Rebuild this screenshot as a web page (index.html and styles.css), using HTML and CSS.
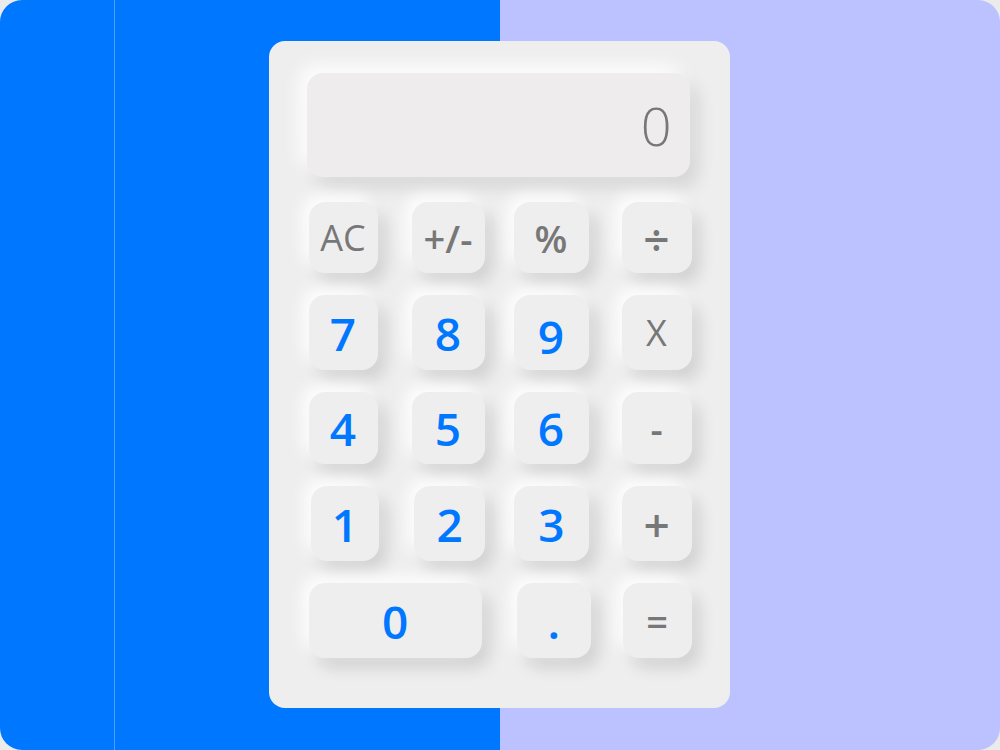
FILE: index.html
```html
<!DOCTYPE html>
<html lang="en">
<head>
    <meta charset="UTF-8">
    <meta name="viewport" content="width=device-width, initial-scale=1.0">
    <title>Calculator</title>
    <link rel="stylesheet" href="styles.css">
</head>
<body>
    <div class="stage">
        <div class="calculator">
            <div class="display" id="display">0</div>

            <div class="keys">
                <div class="row short">
                    <button class="key op c1">AC</button>
                    <button class="key op semi c2">+/-</button>
                    <button class="key op semi c3">%</button>
                    <button class="key op semi big c4">&divide;</button>
                </div>
                <div class="row tall">
                    <button class="key num c1">7</button>
                    <button class="key num c2">8</button>
                    <button class="key num c3 low">9</button>
                    <button class="key op c4">X</button>
                </div>
                <div class="row">
                    <button class="key num c1">4</button>
                    <button class="key num c2">5</button>
                    <button class="key num c3">6</button>
                    <button class="key op semi c4">-</button>
                </div>
                <div class="row shifted tall">
                    <button class="key num c1">1</button>
                    <button class="key num c2 tight">2</button>
                    <button class="key num c3">3</button>
                    <button class="key op semi big c4">+</button>
                </div>
                <div class="row tall">
                    <button class="key num zero">0</button>
                    <button class="key num dot">.</button>
                    <button class="key op semi eq">=</button>
                </div>
            </div>
        </div>
    </div>
</body>
</html>
```

FILE: styles.css
```css
* {
    box-sizing: border-box;
}
body {
    margin: 0;
    background-color: #ecebeb;
    font-family: "Open Sans", "Noto Sans", sans-serif;
}
.stage {
    position: relative;
    width: 1000px;
    height: 750px;
    border-radius: 22px;
    overflow: hidden;
    background: linear-gradient(90deg, #0077ff 0%, #0077ff 50%, #bbc2ff 50%, #bbc2ff 100%);
    display: flex;
    justify-content: center;
    padding-top: 41px;
}
/* thin guide line on the blue side */
.stage::before {
    content: "";
    position: absolute;
    top: 0;
    bottom: 0;
    left: 114px;
    width: 1px;
    background: rgba(255, 255, 255, 0.3);
}
.calculator {
    width: 461px;
    height: 667px;
    margin-left: -2px;
    background: #efeeee;
    border-radius: 16px;
    padding: 32px 40px 0 38px;
    position: relative;
}
.display {
    height: 104px;
    border-radius: 16px;
    background: #eeeced;
    box-shadow: -8px -8px 18px rgba(255, 255, 255, 0.9),
                8px 10px 18px rgba(0, 0, 0, 0.11);
    display: flex;
    align-items: center;
    justify-content: flex-end;
    padding-right: 18px;
    font-size: 54px;
    font-weight: 300;
    color: #777777;
    line-height: 1;
}
.keys {
    margin-top: 25px;
    margin-right: -2px;
    padding-left: 2px;
    display: flex;
    flex-direction: column;
    gap: 22px;
}
.row {
    display: flex;
    height: 72px;
}
.row.short {
    height: 71px;
}
.row.tall {
    height: 75px;
}
.row.shifted {
    padding-left: 2px;
}
.key {
    height: 100%;
    border: none;
    border-radius: 16px;
    background: #efeeef;
    box-shadow: -7px -7px 16px rgba(255, 255, 255, 0.9),
                8px 10px 16px rgba(0, 0, 0, 0.12);
    font-family: inherit;
    line-height: 1;
    display: flex;
    align-items: center;
    justify-content: center;
    padding: 0;
    cursor: pointer;
}
/* column widths and the uneven gutters between them */
.c1 { width: 69px; }
.c2 { width: 73px; margin-left: 34px; }
.c3 { width: 75px; margin-left: 29px; }
.c4 { width: 70px; margin-left: 33px; }
.c2.tight { width: 71px; margin-left: 35px; }
.zero { width: 174px; }
.dot { width: 74px; margin-left: 35px; }
.eq { width: 69px; margin-left: 32px; }
.num {
    color: #0077ff;
    font-size: 46px;
    font-weight: 600;
}
.num.low {
    padding-top: 6px;
}
.op {
    color: #777777;
    font-size: 36px;
    font-weight: 400;
}
.op.semi {
    font-size: 38px;
    font-weight: 600;
}
.op.big {
    font-size: 46px;
}
```
